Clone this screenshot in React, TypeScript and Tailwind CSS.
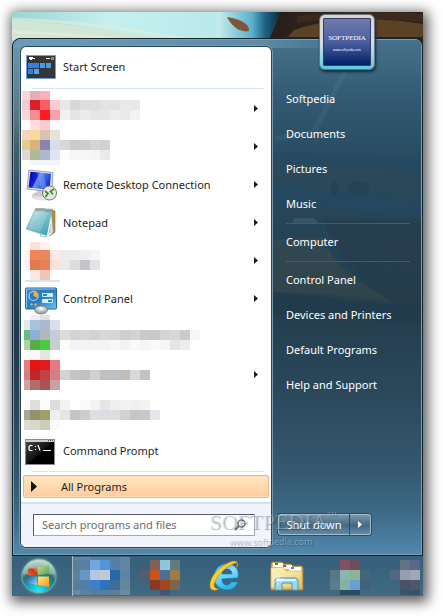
import React from "react";

type Strip = { x: number; y: number; h?: number; colors: string };

// Each strip is a run of censored blocks, snapped to a ten pixel grid.
function Mosaic({ top, left = 21, width = 250, height = 38, strips }: { top: number; left?: number; width?: number; height?: number; strips: Strip[] }) {
  return (
    <svg className="block shrink-0 overflow-visible" width={width} height={height} viewBox={`${left} ${top} ${width} ${height}`} shapeRendering="crispEdges" aria-hidden="true">
      {strips.map((s, i) =>
        s.colors.split(" ").map((c, j) => {
          const start = j === 0 ? s.x : Math.floor(s.x / 10) * 10 + j * 10;
          const end = Math.floor(s.x / 10) * 10 + (j + 1) * 10;
          return c === "-" ? null : <rect key={`${i}-${j}`} x={start} y={s.y} width={end - start} height={s.h ?? 10} fill={`#${c}`} />;
        })
      )}
    </svg>
  );
}

const redApp: Strip[] = [
  { x: 22, y: 91, h: 9, colors: "f9d5dc e0b0b9 f9b2ba" },
  { x: 22, y: 100, colors: "f3cad4 da2128 fa5d65 fccbd0 e8e8e8 d7d7d9 dedede dfdede e2e3e4 e4e2e4 e8e9e9 e8e8e7" },
  { x: 22, y: 110, colors: "fcd5d9 f98c93 ff1a1d f9a0a8 f1f1f1 e5e5e6 edecea e6e5e8 e9e6e6 ebedf0 e9eaec f3f3f3" },
  { x: 30, y: 120, colors: "fddee1 fdcacf fcfcfe" },
];
const yellowApp: Strip[] = [
  { x: 22, y: 130, colors: "f6d4c0 f5da9a d8c2b2 e8e4d3" },
  { x: 22, y: 140, colors: "e0cc90 dbb180 8985b0 d7ddee d8d7d4 cbcbcd cdcdce d7d4d3 d1d1d3" },
  { x: 22, y: 150, colors: "e1d8d1 b1b998 aeb9cf dee4f1 fcfcfc f6f6f6 f7f7f7 f6f5f3 eaeaea" },
  { x: 30, y: 160, h: 5, colors: "f5f5f6 f5f5f6 f5f4f6" },
];
const orangeApp: Strip[] = [
  { x: 30, y: 242, h: 8, colors: "fde2da fef5f3" },
  { x: 25, y: 250, colors: "fdf3f0 ee855c ee855c fbe9e6 ebebe9 ecedef efeef0 f6f5f8" },
  { x: 25, y: 260, colors: "fcefec e17950 e98158 fbe1da eaeae8 dddddd c5c5c5 e3e2e8" },
  { x: 30, y: 270, colors: "f8e9e3 f1c4b4" },
  { x: 25, y: 280, h: 2, colors: "d6e5f3 d6e5f3 d6e5f3 d6e5f3" },
];
const greenApp: Strip[] = [
  { x: 30, y: 315, h: 5, colors: "f0f0f2 e0e2e3" },
  { x: 24, y: 320, colors: "dcede4 a6c3dd acb7d0 d9dee8" },
  { x: 24, y: 330, colors: "68bd77 90aeda b0b8bd c5cbd8 dddcd7 d5d1d4 dad4d4 d0d3d6 d8d8d4 d7d6d5 cfcdd2 d3d4cf cbc9cf c9c7c7 d4d3d6 d8d8d6 cdcacc f4f8fd" },
  { x: 24, y: 340, colors: "afd3a8 55ae49 4bc93f c7cece fbfcf8 f4f4f4 f3f3f3 f5f5f5 f4f4f4 f7f7f7 f2f2f2 f9f9f9 f5f5f5 fafafa f5f5f5 e6e5e4 ecedef" },
  { x: 24, y: 350, colors: "fcfcfc f9f9f9 e1e8e0 fcfcfc" },
];
const crimsonApp: Strip[] = [
  { x: 24, y: 360, colors: "e47e82 e61214 e01c1f e47b7e" },
  { x: 24, y: 370, colors: "d38083 bf272b c24246 d07f82 d3d3d1 c6c4c4 c1c1c1 cfd0d4 c4bdbd bdc1c5 c3bcbc d8d9db c3c3c3" },
  { x: 24, y: 380, colors: "cfa2a5 b26b6c a85356 cca1a3" },
];
const oliveApp: Strip[] = [
  { x: 24, y: 400, colors: "fafafa dedede fcfcfc dcdcdc f2f2f2 - fbf9f9 f4f2f3 e6e5e6 f0eff0 f2f1f2 efefef f3f2f3" },
  { x: 24, y: 410, colors: "a8a793 93926a 9f9f69 eeeeee e5e6e0 c7c4c9 cfcbce dce1de dddbe3 dcdee0 d1d1d2 c9c4c6 cbc6c9 e6e7ec" },
  { x: 24, y: 420, colors: "dcddce d8d7d0 cdcdba fafafa" },
];

function Arrow({ className = "" }: { className?: string }) {
  return (
    <svg className={className} width="4" height="7" viewBox="0 0 4 7" aria-hidden="true">
      <path d="M0 0L4 3.5L0 7Z" fill="currentColor" />
    </svg>
  );
}

function StartScreenIcon() {
  return (
    <svg width="32" height="32" viewBox="0 0 32 32" shapeRendering="crispEdges" aria-hidden="true">
      <rect x="1.500" y="4.500" width="29" height="23" fill="#353637" stroke="#6da0dc" />
      <path d="M4 6h4v1h2v1h-3v1h-2v-1h-1zM21 7h4v1h-4z" fill="#fff" />
      <path d="M26 6h3v3h-3z" fill="#888" />
      <path d="M3 12h11v5H3zM3 18h5v5H3z" fill="#2f82df" />
      <path d="M15 12h5v5h-5zM21 12h5v5h-5z" fill="#4b97e8" />
      <path d="M9 18h5v5H9z" fill="#5ba1ea" />
    </svg>
  );
}

function RemoteIcon() {
  return (
    <svg width="32" height="32" viewBox="0 0 32 32" aria-hidden="true">
      <defs>
        <linearGradient id="rdScreen" x1="0" y1="0" x2="1" y2="0.4">
          <stop offset="0" stopColor="#0000a6" />
          <stop offset="0.420" stopColor="#1423e0" />
          <stop offset="0.480" stopColor="#6b94f8" />
          <stop offset="1" stopColor="#123ad8" />
        </linearGradient>
        <linearGradient id="rdStand" x1="0" y1="0" x2="0" y2="1">
          <stop offset="0" stopColor="#b5b8ba" />
          <stop offset="1" stopColor="#f4f4f4" />
        </linearGradient>
      </defs>
      <ellipse cx="16" cy="27" rx="9" ry="4" fill="url(#rdStand)" stroke="#c3c3c3" strokeWidth="0.500" />
      <path d="M12 20l8 1 1 5h-9z" fill="#c9cccd" />
      <path d="M4 1L28 3.500 27 23 2 20Z" fill="#dce0e4" stroke="#8c9298" strokeWidth="0.800" />
      <path d="M5.500 2.800L26 4.800 24.500 20.800 3.500 18.400Z" fill="url(#rdScreen)" />
      <path d="M12 3.500L18 4 22 20 16 19.600Z" fill="#7d9cf6" opacity="0.500" />
      <circle cx="24.500" cy="24" r="7" fill="#e5e6e6" stroke="#777" />
      <path d="M20 22l3 2.500-2.500 3.500M29 20l-3.500 2.500 2.500 3" fill="none" stroke="#36962e" strokeWidth="1.800" />
    </svg>
  );
}

function NotepadIcon() {
  return (
    <svg width="32" height="32" viewBox="0 0 32 32" aria-hidden="true">
      <defs>
        <linearGradient id="npCover" x1="0.100" y1="0" x2="0.700" y2="1">
          <stop offset="0" stopColor="#c5e8ed" />
          <stop offset="0.450" stopColor="#7cc2ce" />
          <stop offset="1" stopColor="#43a4b5" />
        </linearGradient>
      </defs>
      <path d="M26 3l4 1v21l-5 4z" fill="#b09045" stroke="#77602e" strokeWidth="0.500" />
      <path d="M26 4l2 21-6 5-7-1z" fill="#f5f9f9" stroke="#8c9fa3" strokeWidth="0.600" />
      <path d="M10 3L27 4 23 29 1 22Z" fill="url(#npCover)" stroke="#87aeb4" strokeWidth="0.700" />
      <path d="M10 5l13 1-8 19L3 21z" fill="#fff" opacity="0.160" />
      <path d="M22 28L26 8l1 19-5 3z" fill="#edf3f3" />
      <path d="M24 27l2-10M26 27l-.300-6" stroke="#98a9ac" strokeWidth="0.600" />
      <path d="M10 3h17" stroke="#c3cccd" strokeWidth="3" />
      <path d="M11 1v3M13 1v3M15 1v3M17 1v3M19 1v3M21 2v3M23 2v3M25 2v3M27 2v3" stroke="#55666a" strokeWidth="0.800" />
    </svg>
  );
}

function ControlIcon() {
  return (
    <svg width="32" height="32" viewBox="0 0 32 32" aria-hidden="true">
      <defs>
        <linearGradient id="cpPanel" x1="0" y1="0" x2="1" y2="1">
          <stop offset="0" stopColor="#3d88cd" />
          <stop offset="0.500" stopColor="#287abf" />
          <stop offset="1" stopColor="#70c5f0" />
        </linearGradient>
        <radialGradient id="cpKnob" cx="0.500" cy="0.300" r="0.700">
          <stop offset="0" stopColor="#fff" />
          <stop offset="1" stopColor="#898d90" />
        </radialGradient>
      </defs>
      <rect x="0.500" y="5" width="31" height="21" rx="1" fill="url(#cpPanel)" stroke="#2367a1" />
      <path d="M1.500 25V6h29" fill="none" stroke="#8ec9ed" />
      <circle cx="8.500" cy="13" r="4.500" fill="#2a7abd" stroke="#aadaf1" strokeWidth="1.200" />
      <path d="M8.500 13V7a6 6 0 014 8z" fill="#faaa35" />
      <path d="M17.500 10.500h10v3h-10zM17.500 16.500h10v3h-10z" fill="#d9f4ff" stroke="#cceaff" />
      <path d="M18 11h4v2h-4zM23 17h4v2h-4z" fill="#1690c6" />
      <circle cx="6.500" cy="21.500" r="1.200" fill="#54d6fa" />
      <circle cx="10.500" cy="21.500" r="1.300" fill="#ffac3a" />
      <ellipse cx="16" cy="27" rx="6.500" ry="4" fill="url(#cpKnob)" stroke="#777" strokeWidth="0.700" />
    </svg>
  );
}

function CommandIcon() {
  return (
    <svg width="32" height="32" viewBox="0 0 32 32" aria-hidden="true">
      <defs>
        <linearGradient id="cmdShade" x1="0" y1="0" x2="1" y2="1">
          <stop offset="0" stopColor="#4b4b4b" />
          <stop offset="0.500" stopColor="#151515" />
          <stop offset="0.550" stopColor="#000" />
        </linearGradient>
      </defs>
      <rect x="0.500" y="4.500" width="29" height="25" fill="url(#cmdShade)" stroke="#8b8b8b" />
      <path d="M1 5h28v2H1z" fill="#cbcfd0" />
      <path d="M23 5h1v1h-1zM25 5h1v1h-1zM27 5h1v1h-1z" fill="#555" />
      <path d="M7.500 10.500H5L4 11.500v3l1 1h2.500M10.500 11v1M10.500 14v1M13 10l2 5.500M18 15.500h8" fill="none" stroke="#fff" strokeWidth="1.200" />
    </svg>
  );
}

function ProgramRow({ label, icon, arrow }: { label: string; icon: React.ReactNode; arrow?: boolean }) {
  return (
    <button className="flex h-[38px] w-full items-center gap-1.5 pt-px pr-[13px] pl-1 text-left">
      {icon}
      <span className="flex-1">{label}</span>
      {arrow && <Arrow />}
    </button>
  );
}

function HiddenRow({ top, strips, arrow }: { top: number; strips: Strip[]; arrow?: boolean }) {
  return (
    <button className="flex h-[38px] w-full items-center pr-[13px]" aria-label="Program">
      <Mosaic top={top} width={180} strips={strips} />
      {arrow && <Arrow className="ml-auto" />}
    </button>
  );
}

function PlaceLink({ label }: { label: string }) {
  return (
    <a href="#" className="flex h-[35px] items-center pb-0.5">
      {label}
    </a>
  );
}

function Wallpaper() {
  return (
    <svg className="absolute inset-0 h-full w-full" viewBox="0 0 411 584" preserveAspectRatio="none" aria-hidden="true">
      <defs>
        <linearGradient id="sky" x1="0" y1="0" x2="1" y2="0">
          <stop offset="0" stopColor="#9bd4d2" />
          <stop offset="0.450" stopColor="#c5f0ee" />
          <stop offset="1" stopColor="#b9e8eb" />
        </linearGradient>
        <linearGradient id="chrome" x1="0" y1="0" x2="1" y2="0">
          <stop offset="0" stopColor="#c9edec" />
          <stop offset="0.550" stopColor="#5ab0cc" />
          <stop offset="0.750" stopColor="#1c6385" />
          <stop offset="1" stopColor="#0f2936" />
        </linearGradient>
      </defs>
      <rect width="411" height="584" fill="#2a1f18" />
      <rect width="215" height="40" fill="url(#sky)" />
      <path d="M0 8C60 12 110 20 165 28H0Z" fill="#d3e6d6" />
      <path d="M0 7C70 10 110 16 180 28M0 20C45 21 80 24 110 28" fill="none" stroke="#e2eedd" strokeWidth="3" opacity="0.600" />
      <path d="M205 0h64l-12 28h-52z" fill="url(#chrome)" />
      <path d="M215 5c15 2 23 8 22 14-8 2-17-4-22-14z" fill="#7c5638" />
      <path d="M283 0h128v30H269z" fill="#2d221b" />
      <path d="M282 18c45-15 90-12 129-6v13H276z" fill="#5b4126" />
      <path d="M285 4c40-6 90-5 126-2v8c-40-4-85-5-126 1z" fill="#3b2a1d" />
    </svg>
  );
}

function Glass() {
  return (
    <svg className="absolute inset-0 h-full w-full" viewBox="0 0 407 514" preserveAspectRatio="none" aria-hidden="true">
      <defs>
        <linearGradient id="glass" x1="0" y1="0" x2="0" y2="1">
          <stop offset="0" stopColor="#47718b" />
          <stop offset="0.120" stopColor="#315971" />
          <stop offset="0.240" stopColor="#284a5e" />
          <stop offset="0.520" stopColor="#233d4e" />
          <stop offset="0.680" stopColor="#2b475a" />
          <stop offset="0.840" stopColor="#355970" />
          <stop offset="0.920" stopColor="#3d6a87" />
          <stop offset="1" stopColor="#5088ad" />
        </linearGradient>
        <linearGradient id="rim" x1="0" y1="0" x2="0" y2="1">
          <stop offset="0" stopColor="#6b96b2" />
          <stop offset="0.150" stopColor="#577785" />
          <stop offset="0.200" stopColor="#45636c" />
          <stop offset="0.320" stopColor="#294c69" />
          <stop offset="0.600" stopColor="#1f3442" stopOpacity="0.500" />
          <stop offset="1" stopColor="#34566e" stopOpacity="0" />
        </linearGradient>
        <linearGradient id="topGlow" x1="0" y1="0" x2="1" y2="0">
          <stop offset="0" stopColor="#6e9ab5" />
          <stop offset="0.600" stopColor="#5e8ba7" />
          <stop offset="1" stopColor="#426b84" stopOpacity="0" />
        </linearGradient>
      </defs>
      <rect width="407" height="514" fill="url(#glass)" />
      <rect width="9" height="514" fill="url(#rim)" />
      <rect width="407" height="8" fill="url(#topGlow)" />
      <path d="M258 112l149 6v12l-149-8z" fill="#204966" opacity="0.400" />
      <path d="M258 122l149 10v22l-149-12z" fill="#354957" opacity="0.350" />
      <path d="M258 147c50 3 90 12 149 15v14c-59-1-99-12-149-15z" fill="#234865" opacity="0.500" />
      <path d="M308 180l99-2v92c-38-6-78-40-99-90z" fill="#283a44" opacity="0.450" />
      <path d="M258 200l50-3c8 16 20 34 39 46l36 22-125-13z" fill="#4f5247" opacity="0.300" />
      <path d="M280 178h20l5 6h-27z" fill="#71838b" opacity="0.250" />
      <ellipse cx="345" cy="148" rx="11" ry="7" fill="#1b3345" opacity="0.200" />
      <ellipse cx="321" cy="148" rx="4" ry="7" fill="#1b3345" opacity="0.200" />
      <path d="M315 183c14 24 32 52 60 74M335 188c13 28 27 47 58 64M352 190c16 19 22 43 50 53" fill="none" stroke="#1c3d55" strokeWidth="2" opacity="0.300" />
      <path d="M258 252c50 0 102 8 149 12v20c-50-3-99-8-149-10z" fill="#203a4c" opacity="0.400" />
      <path d="M333 27L300 92 261 99" fill="none" stroke="#8baab9" strokeWidth="5" opacity="0.090" />
    </svg>
  );
}

function Orb() {
  return (
    <svg width="42" height="40" viewBox="0 0 42 40" aria-hidden="true">
      <defs>
        <radialGradient id="orb" cx="0.480" cy="0.950" r="0.900">
          <stop offset="0" stopColor="#25edf8" />
          <stop offset="0.380" stopColor="#1ca0b6" />
          <stop offset="0.620" stopColor="#2a6e77" />
          <stop offset="1" stopColor="#b8cfc4" />
        </radialGradient>
        <radialGradient id="halo">
          <stop offset="0.700" stopColor="#66b394" stopOpacity="0.600" />
          <stop offset="1" stopColor="#66b394" stopOpacity="0" />
        </radialGradient>
        <linearGradient id="paneRed" x1="0" y1="1" x2="1" y2="0"><stop offset="0" stopColor="#ed6436" /><stop offset="0.600" stopColor="#c43c16" /><stop offset="1" stopColor="#e9a46c" /></linearGradient>
        <linearGradient id="paneGreen" x1="0" y1="0" x2="1" y2="1"><stop offset="0" stopColor="#bdd7a0" /><stop offset="1" stopColor="#56a83c" /></linearGradient>
        <linearGradient id="paneBlue" x1="0" y1="0" x2="1" y2="1"><stop offset="0" stopColor="#1d63ad" /><stop offset="1" stopColor="#9bd5f3" /></linearGradient>
        <linearGradient id="paneGold" x1="0" y1="0" x2="1" y2="1"><stop offset="0" stopColor="#ffe57d" /><stop offset="1" stopColor="#f99916" /></linearGradient>
      </defs>
      <circle cx="21" cy="20" r="20" fill="url(#halo)" />
      <circle cx="21" cy="20" r="17" fill="url(#orb)" stroke="#74aaa9" />
      <path d="M5 19C5 10 12 4 21 4s16 6 16 15c-8-2-22-2-32 0z" fill="#dce9dd" opacity="0.370" />
      <path d="M10 13l9-1.500V19l-9 .5z" fill="url(#paneRed)" />
      <path d="M20 11l11-2v9l-11 1z" fill="url(#paneGreen)" />
      <path d="M10 20.500h9V29l-9-2z" fill="url(#paneBlue)" />
      <path d="M20 20.500h11V31l-11-2z" fill="url(#paneGold)" />
    </svg>
  );
}

function ExplorerLogo() {
  return (
    <svg width="32" height="32" viewBox="0 0 32 32" aria-hidden="true">
      <defs>
        <linearGradient id="ieBlue" x1="0" y1="0" x2="0.300" y2="1"><stop offset="0" stopColor="#3697dc" /><stop offset="0.400" stopColor="#83e1ff" /><stop offset="1" stopColor="#31b3ec" /></linearGradient>
      </defs>
      <path d="M29 18C31 9 25 3.500 18 3.500 10 3.500 5 10 5 17c0 8 6 13 13 13 5 0 9-3 11-8h-7c-1 2-2 3-4 3-3 0-5-2-5-6zM13 14c0-3 2-5 5-5s5 2 5 5z" fill="url(#ieBlue)" stroke="#1779b7" strokeWidth="0.700" fillRule="evenodd" />
      <path d="M27 8C31-.5 25-.5 17 4 6 10 0 20 1 27c1 4 5 4 9 2-6 0-6-5-2-11 5-8 15-15 20-15 2 0 1 3-1 5z" fill="#f9cf32" stroke="#ba7b11" strokeWidth="0.600" />
    </svg>
  );
}

function FolderLogo() {
  return (
    <svg width="34" height="32" viewBox="0 0 34 32" aria-hidden="true">
      <defs>
        <linearGradient id="folder" x1="0" y1="0" x2="1" y2="1"><stop offset="0" stopColor="#fff3bd" /><stop offset="0.600" stopColor="#f4dd91" /><stop offset="1" stopColor="#e9be55" /></linearGradient>
      </defs>
      <path d="M1 30V4l1-2h10l2 2h7l2 2h9l1 2v22z" fill="#e0bd62" stroke="#947941" />
      <path d="M3 3h10v4H3zM11 5h11v4H11zM19 7h12v4H19z" fill="#fff" />
      <path d="M5 3h3v2H5z" fill="#14a928" /><path d="M13 5h3v2h-3z" fill="#d54225" /><path d="M21 7h3v2h-3z" fill="#2797de" />
      <path d="M1 8l12-1 3 4h16v17H1z" fill="url(#folder)" stroke="#cfac54" strokeWidth="0.600" />
      <path d="M5 30V19l3-1h18l2 2v10h-6v-7H12v7z" fill="#9ed7ed" stroke="#4999bd" />
      <path d="M7 20h19" stroke="#d7f7ff" strokeWidth="2" />
      <path d="M8 13v12M2 19h12M4 15l8 8M12 15l-8 8" stroke="#fff" strokeWidth="0.800" opacity="0.800" />
    </svg>
  );
}

const activeTask: Strip[] = [
  { x: 73, y: 557, h: 3, colors: "64879f 5f86a4 5580a3 5580a3 5580a3 63859c" },
  { x: 73, y: 560, colors: "5c7f98 5780a2 72a6df 5295db 527fa9 64879f" },
  { x: 73, y: 570, colors: "5f8298 6696c4 b0c8e2 c2c9d2 2768aa 5b86a7" },
  { x: 73, y: 580, colors: "5b7e98 527da4 3b80c8 2d72ba 3e6c9b 64879b" },
  { x: 73, y: 590, h: 5, colors: "678ba3 58829f 557c9d 567e9f 5c8097 6a8b9e" },
];
const firefoxTask: Strip[] = [
  { x: 150, y: 560, colors: "85605b 8dc7d9 617a7c" },
  { x: 140, y: 570, colors: "535d70 c95318 4a6e94 9b7c43" },
  { x: 150, y: 580, colors: "8c3828 a1481b 7d6548" },
  { x: 160, y: 590, h: 5, colors: "44556f" },
];
const pinkTask: Strip[] = [
  { x: 340, y: 560, colors: "85505f 6f4c5e" },
  { x: 330, y: 570, colors: "5a7788 8bb5b0 8cb397 45667a" },
  { x: 330, y: 580, colors: "5d7b8e 86afa5 67a0d1 446176" },
  { x: 340, y: 590, h: 5, colors: "2b4b60 2b4b60" },
];
const greyTask: Strip[] = [
  { x: 400, y: 560, colors: "667283 5c6889" },
  { x: 390, y: 570, colors: "506980 989dab a0a8b7" },
  { x: 400, y: 580, colors: "4b516d 4e566c" },
  { x: 400, y: 590, h: 5, colors: "35556a 365168" },
];

function Watermark() {
  return (
    <div className="pointer-events-none absolute bottom-[47px] left-[197px] text-white/30 [text-shadow:1px_1px_1px_rgb(20_40_60_/_35%)]">
      <div className="flex font-['Liberation_Serif',serif] text-[22px] leading-[26px]">
        SOFTPEDIA<span className="text-[6px] leading-[10px]">TM</span>
      </div>
      <div className="pl-5 font-['Noto_Sans',sans-serif] text-[9px] leading-[14px]">www.softpedia.com</div>
    </div>
  );
}

export default function App() {
  return (
    <div className="bg-white pt-3 pr-5 pb-5 pl-3 font-['Noto_Sans','Open_Sans',sans-serif] text-[11px] leading-4 text-[#1e1e1e]">
      <main className="relative pt-[26px] shadow-[2px_3px_12px_3px_rgb(0_0_0_/_65%)]">
        <Wallpaper />
        <section className="relative rounded-t-lg border border-[#10242f] bg-[#345b75]" aria-label="Start menu">
          <div className="relative rounded-t-[7px] border border-[#7b9eb3]">
            <div className="absolute inset-0 overflow-hidden rounded-t-md"><Glass /></div>
            <div className="relative flex pt-[7px] pb-[7px] pl-[7px]">
              <div className="w-[250px] shrink-0 overflow-hidden rounded-[5px] bg-white shadow-[0_0_0_1px_#25475c,0_0_0_2px_#7998aa]">
                <button className="flex h-[41px] w-full items-center gap-1.5 pb-0.5 pl-1 text-left">
                  <StartScreenIcon />Start Screen
                </button>
                <hr className="mr-[7px] ml-[11px] border-[#d6e5f5]" />
                <HiddenRow top={89} strips={redApp} arrow />
                <HiddenRow top={127} strips={yellowApp} arrow />
                <ProgramRow label="Remote Desktop Connection" icon={<RemoteIcon />} arrow />
                <ProgramRow label="Notepad" icon={<NotepadIcon />} arrow />
                <HiddenRow top={241} strips={orangeApp} arrow />
                <ProgramRow label="Control Panel" icon={<ControlIcon />} arrow />
                <HiddenRow top={317} strips={greenApp} />
                <HiddenRow top={355} strips={crimsonApp} arrow />
                <HiddenRow top={393} strips={oliveApp} />
                <ProgramRow label="Command Prompt" icon={<CommandIcon />} />
                <hr className="mt-0.5 mr-[7px] ml-[11px] border-[#d6e5f5]" />
                <div className="px-0.5 pt-[3px] pb-1">
                  <button className="flex h-[23px] w-full items-center gap-6 rounded-[2px] border border-[#f3b087] bg-linear-to-b from-[#ffe8c2] to-[#ffcb9d] pl-1.5 text-left shadow-[inset_0_0_0_1px_#ffddb3]">
                    <svg width="7" height="11" viewBox="0 0 7 11" aria-hidden="true"><path d="M1 0L7 5.500 1 11Z" fill="#111" /></svg>
                    All Programs
                  </button>
                </div>
                <div className="border-t-2 border-[#d4e2ef] bg-[#f1f4fc] pt-[10px] pr-4 pb-[11px] pl-3">
                  <form className="flex h-[22px] items-center border border-[#a4a9ae] border-t-[#555a60] border-l-[#555a60] bg-white pr-2 pl-2">
                    <input type="search" aria-label="Search programs and files" placeholder="Search programs and files" className="min-w-0 flex-1 bg-transparent outline-none placeholder:text-[#6c6c6c]" />
                    <svg width="12" height="12" viewBox="0 0 12 12" fill="none" stroke="#6e6e6e" strokeWidth="1.500" aria-hidden="true"><circle cx="7.500" cy="4.500" r="3.500" /><path d="M5 7L1 11" strokeWidth="2" /></svg>
                  </form>
                </div>
              </div>
              <nav className="flex min-w-0 flex-1 flex-col pt-[35px] pr-[11px] pb-[12px] pl-[15px] text-white">
                <PlaceLink label="Softpedia" />
                <PlaceLink label="Documents" />
                <PlaceLink label="Pictures" />
                <PlaceLink label="Music" />
                <hr className="my-px border-[#445c69]" />
                <PlaceLink label="Computer" />
                <hr className="my-px border-[#445c69]" />
                <PlaceLink label="Control Panel" />
                <PlaceLink label="Devices and Printers" />
                <PlaceLink label="Default Programs" />
                <PlaceLink label="Help and Support" />
                <div className="mt-auto -ml-2 flex h-[21px] self-start">
                  <button className="w-[72px] rounded-l-[3px] border border-[#a4bccb] bg-linear-to-b from-[#7795a9] via-[#456b84] via-55% to-[#5e8aa7] shadow-[0_0_0_1px_#2b4d64]">Shut down</button>
                  <button className="flex w-[21px] items-center justify-center rounded-r-[3px] border border-l-0 border-[#a4bccb] bg-linear-to-b from-[#7795a9] via-[#456b84] via-55% to-[#5e8aa7] shadow-[0_0_0_1px_#2b4d64]" aria-label="Shut down options"><Arrow /></button>
                </div>
              </nav>
            </div>
          </div>
        </section>
        <footer className="relative flex h-10 items-center overflow-hidden bg-linear-to-b from-[#365f7b] to-[#406983]">
          <button className="ml-[6px] w-[42px]" aria-label="Start"><Orb /></button>
          <button className="ml-3 w-[58px] border-l border-[#a5b9c5]" aria-label="Window"><Mosaic left={73} top={556} width={57} height={40} strips={activeTask} /></button>
          <button className="ml-[10px] w-[40px]" aria-label="Browser"><Mosaic left={140} top={556} width={40} height={40} strips={firefoxTask} /></button>
          <button className="ml-[29px] w-8" aria-label="Internet Explorer"><ExplorerLogo /></button>
          <button className="ml-[29px] w-[34px]" aria-label="File Explorer"><FolderLogo /></button>
          <button className="ml-[26px] w-[40px]" aria-label="Application"><Mosaic left={330} top={556} width={40} height={40} strips={pinkTask} /></button>
          <button className="ml-5 w-[33px] shrink-0" aria-label="Application"><Mosaic left={390} top={556} width={33} height={40} strips={greyTask} /></button>
        </footer>
        <div className="absolute top-[2px] right-[48px] h-[56px] w-[56px] rounded-[6px] border border-[#667885] bg-linear-to-b from-[#d9d4cb] via-[#d6dde3] to-[#55c9df] p-[3px] shadow-[1px_2px_3px_#102b3b]">
          <div className="flex h-full flex-col items-center rounded-[1px] border border-[#303f6c] bg-linear-to-b from-[#7079ac] via-[#4b60a0] via-50% to-[#041f68] pt-3 text-white">
            <span className="font-['Liberation_Serif',serif] text-[7px] leading-[14px]">SOFTPEDIA</span>
            <span className="text-[3px] leading-[10px]">www.softpedia.com</span>
          </div>
        </div>
        <Watermark />
      </main>
    </div>
  );
}
